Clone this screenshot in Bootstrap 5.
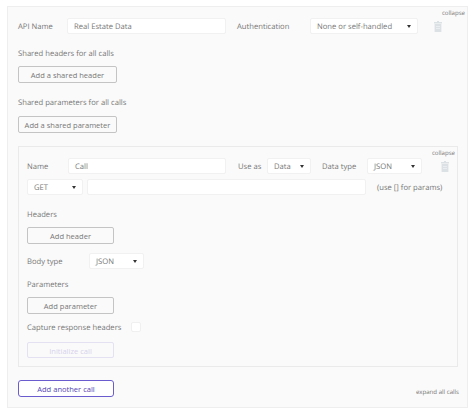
<!DOCTYPE html>
<html lang="en">
<head>
<meta charset="utf-8">
<title>API connector</title>
<link href="https://cdn.jsdelivr.net/npm/bootstrap@5.3.0/dist/css/bootstrap.min.css" rel="stylesheet">
<style>
body{background:#fff;margin:0;font-family:"Open Sans","Noto Sans",sans-serif;font-size:7.65px;color:#777;line-height:12px;text-rendering:geometricPrecision}
.api-shell{width:461px;height:402px;margin:6px 0 0 7px;padding:11px 10px 0 10px;background:#fafafa;border:1px solid #eeeeee;position:relative}
.call-shell{width:440px;height:221px;margin-top:13px;padding:11px 0 0 8px;background:#fafafa;border:1px solid #eaeaea;position:relative}
.fold-link{position:absolute;top:1px;right:2px;font-size:6.1px;color:#777;line-height:9px}
.row-line{height:16px}
.row-line>span,.gap-cap>.cap-lbl{padding-top:2px}
.lbl-api{width:49px;flex:none}
.field,.pick{height:16px;background:#fff;border:1px solid #f1f1f1;border-radius:2px;color:#777;padding:2px 6px 0;display:flex;align-items:center;flex:none}
.pick{justify-content:space-between}
.pick::after{content:"";border:2.5px solid transparent;border-top:3px solid #333;border-bottom:0;margin-top:-2px}
.act-btn{display:block;height:17px;padding:1px 0 0;border:1px solid #c4c4c4;border-radius:2px;background:#fafafa;color:#777;font-size:7.55px;line-height:14px;text-align:center;white-space:nowrap}
.act-wide{width:99px}
.act-mid{width:87px}
.act-off{height:16px;border-color:#e4e1f3;color:#d6d2ec}
.act-main{width:96px;border-color:#6a5bcf;color:#5546b5;background:#fff;border-radius:3px}
.trash-ico{width:8px;height:11px;display:block;flex:none}
.tick-box{width:10px;height:10px;background:#fff;border:1px solid #f0f0f0;border-radius:2px;flex:none}
.w-159{width:159px}.w-108{width:108px}.w-158{width:158px}.w-44{width:44px}.w-55{width:55px}.w-56{width:56px}.w-279{width:279px}
.m-auth{margin:0 0 0 11px;width:73px;flex:none}
.m-trash{margin-left:16px}
.sec-a{margin-top:14px}
.btn-a{margin-top:6px}
.btn-b{margin-top:7px}
.sec-b{margin-top:14px}
.sp-uses{margin-left:12px;width:29px;flex:none}
.sp-dtype{margin-left:11px;width:45px;flex:none}
.trash-c{margin-left:19px}
.sp-get{margin-top:5px}
.m-input{margin-left:4px}
.hint-txt{margin-left:11px}
.lbl-name{width:41px;flex:none}
.lbl-body{width:62px;flex:none}
.gap-h{margin-top:14px}
.gap-btn{margin-top:6px}
.gap-body{margin-top:9px}
.gap-par{margin-top:10px}
.gap-cap{margin-top:7px;height:12px}
.gap-ini{margin-top:9px}
.cap-lbl{width:104px;flex:none}
.foot-line{margin-top:13px;height:17px;position:relative}
.expand-lnk{position:absolute;right:-2px;bottom:1px;font-size:6.1px;color:#777;line-height:9px}
</style>
</head>
<body>
<div class="api-shell">
  <span class="fold-link">collapse</span>
  <div class="d-flex align-items-center row-line">
    <span class="lbl-api">API Name</span>
    <div class="field w-159">Real Estate Data</div>
    <span class="m-auth">Authentication</span>
    <div class="pick w-108">None or self-handled</div>
    <svg class="trash-ico m-trash" viewBox="0 0 8 11"><path fill="#dbe1e4" d="M3 0h2v1h3v1.400H0V1h3zM.6 3h6.800v8H.6z"/><path stroke="#f2f4f5" stroke-width=".7" d="M2 5.500h4M2 7.500h4"/></svg>
  </div>
  <div class="sec-a">Shared headers for all calls</div>
  <button type="button" class="act-btn act-wide btn-a">Add a shared header</button>
  <div class="sec-b">Shared parameters for all calls</div>
  <button type="button" class="act-btn act-wide btn-b">Add a shared parameter</button>

  <div class="call-shell">
    <span class="fold-link">collapse</span>
    <div class="d-flex align-items-center row-line">
      <span class="lbl-name">Name</span>
      <div class="field w-158">Call</div>
      <span class="sp-uses">Use as</span>
      <div class="pick w-44">Data</div>
      <span class="sp-dtype">Data type</span>
      <div class="pick w-55">JSON</div>
      <svg class="trash-ico trash-c" viewBox="0 0 8 11"><path fill="#dbe1e4" d="M3 0h2v1h3v1.400H0V1h3zM.6 3h6.800v8H.6z"/><path stroke="#f2f4f5" stroke-width=".7" d="M2 5.500h4M2 7.500h4"/></svg>
    </div>
    <div class="d-flex align-items-center row-line sp-get">
      <div class="pick w-56">GET</div>
      <div class="field w-279 m-input"></div>
      <span class="hint-txt">(use [] for params)</span>
    </div>
    <div class="gap-h">Headers</div>
    <button type="button" class="act-btn act-mid gap-btn">Add header</button>
    <div class="d-flex align-items-center row-line gap-body">
      <span class="lbl-body">Body type</span>
      <div class="pick w-55">JSON</div>
    </div>
    <div class="gap-par">Parameters</div>
    <button type="button" class="act-btn act-mid gap-btn">Add parameter</button>
    <div class="d-flex align-items-center gap-cap">
      <span class="cap-lbl">Capture response headers</span>
      <span class="tick-box"></span>
    </div>
    <button type="button" class="act-btn act-mid act-off gap-ini" disabled>Initialize call</button>
  </div>

  <div class="foot-line">
    <button type="button" class="act-btn act-main">Add another call</button>
    <span class="expand-lnk">expand all calls</span>
  </div>
</div>
<script src="https://cdn.jsdelivr.net/npm/bootstrap@5.3.0/dist/js/bootstrap.bundle.min.js"></script>
</body>
</html>
